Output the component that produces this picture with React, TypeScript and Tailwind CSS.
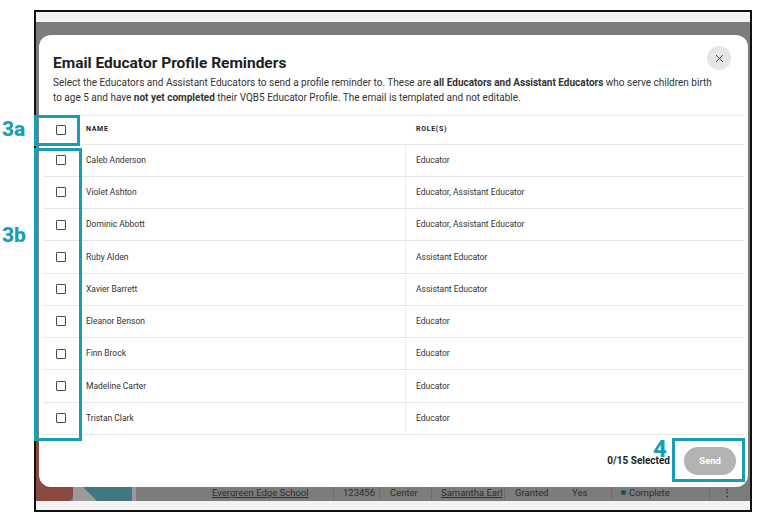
import { X } from "lucide-react";

const rows = [
    ["Caleb Anderson", "Educator"],
    ["Violet Ashton", "Educator, Assistant Educator"],
    ["Dominic Abbott", "Educator, Assistant Educator"],
    ["Ruby Alden", "Assistant Educator"],
    ["Xavier Barrett", "Assistant Educator"],
    ["Eleanor Benson", "Educator"],
    ["Finn Brock", "Educator"],
    ["Madeline Carter", "Educator"],
    ["Tristan Clark", "Educator"],
];

function Box() {
    return <span className="block w-[10px] h-[10px] border-[1.5px] border-[#4a4a4a] rounded-[1px] bg-white" />;
}

function Deco() {
    // the page's header art, dimmed by the backdrop
    return (
        <svg className="absolute left-0 bottom-0" width="100" height="61" viewBox="0 0 100 61">
            <rect x="37" y="0" width="63" height="61" fill="#9a9a9a" />
            <path d="M0 0 H37 V55 Q37 61 31 61 H0 Z" fill="#8a4a42" />
            <polygon points="47,47 96,47 96,61 61,61" fill="#41777f" />
        </svg>
    );
}

export default function App() {
    return (
        <div className="relative w-[763px] h-[521px] bg-white overflow-hidden font-['Roboto',sans-serif] text-[#222]">
            <div className="ml-[34px] mt-[10px] w-[718px] h-[502px] border-2 border-[#111] flex flex-col">
                <div className="h-[10px] bg-[#f3f3f3]" />
                <div className="relative flex-1 bg-[#7c7c7c] flex flex-col pt-[13px] pl-[3px] pr-[2px]">
                    <Deco />
                    <div className="relative z-10 h-[452px] bg-white rounded-[12px] flex flex-col">
                        <div className="relative px-[14px] pt-[18px]">
                            <h1 className="text-[15.5px] leading-[20px] font-bold text-[#1e1e1e]">
                                Email Educator Profile Reminders
                            </h1>
                            <p className="mt-[1.5px] w-[660px] text-[10px] leading-[15px] text-[#333]">
                                Select the Educators and Assistant Educators to send a profile reminder to. These are{" "}
                                <b>all Educators and Assistant Educators</b> who serve children birth to age 5 and have{" "}
                                <b>not yet completed</b> their VQB5 Educator Profile. The email is templated and not editable.
                            </p>
                            <button className="absolute right-[17px] top-[11px] w-[24px] h-[24px] rounded-full bg-[#e6e6e6] flex items-center justify-center text-[#333]">
                                <X size={13} strokeWidth={1.6} />
                            </button>
                        </div>
                        <div className="mx-[4px] mt-[10px]">
                            <div className="flex h-[30px] items-center border-y border-[#e6e6e6]">
                                <div className="w-[35px] flex justify-center"><Box /></div>
                                <div className="w-[328px] pl-[8px] text-[7px] font-bold tracking-[0.1em] text-[#222]">NAME</div>
                                <div className="pl-[10px] text-[7px] font-bold tracking-[0.1em] text-[#222]">ROLE(S)</div>
                            </div>
                            {rows.map(([name, role]) => (
                                <div key={name} className="flex h-[32.25px] border-b border-[#e6e6e6] text-[8.5px] text-[#333]">
                                    <div className="w-[35px] flex items-center justify-center"><Box /></div>
                                    <div className="w-[328px] pl-[8px] flex items-center border-r border-[#ececec]">{name}</div>
                                    <div className="pl-[10px] flex items-center">{role}</div>
                                </div>
                            ))}
                        </div>
                        <div className="flex-1 flex items-center justify-end gap-[14px] pr-[12px]">
                            <span className="text-[10px] font-bold text-[#1e1e1e]">0/15 Selected</span>
                            <button className="w-[52px] h-[28px] rounded-full bg-[#b3b3b3] text-white text-[9.5px] font-bold">
                                Send
                            </button>
                        </div>
                    </div>
                    <div className="relative z-10 flex h-[14px] text-[9.5px] text-[#2e2e2e] leading-[12px]">
                        <div className="w-[161px]" />
                        <div className="w-[134px] pl-[12px] border-r border-[#6e6e6e] underline">Evergreen Edge School</div>
                        <div className="w-[46px] pl-[9px] border-r border-[#6e6e6e]">123456</div>
                        <div className="w-[52px] pl-[10px] border-r border-[#6e6e6e]">Center</div>
                        <div className="w-[73px] pl-[9px] border-r border-[#6e6e6e] underline">Samantha Earl</div>
                        <div className="w-[55px] pl-[10px]">Granted</div>
                        <div className="w-[52px] pl-[12px] border-r border-[#6e6e6e]">Yes</div>
                        <div className="w-[98px] pl-[9px] border-r border-[#6e6e6e] flex items-start gap-[3px]">
                            <span className="mt-[3px] w-[5px] h-[5px] rounded-full bg-[#1f4f5a]" />
                            Complete
                        </div>
                        <div className="pl-[12px] font-bold">⋮</div>
                    </div>
                </div>
                <div className="h-[9px] bg-[#f3f3f3]" />
            </div>

            <span className="absolute z-20 left-[2px] top-[119px] text-[21px] leading-none font-extrabold text-[#179db5]">3a</span>
            <span className="absolute z-20 left-[2px] top-[225px] text-[21px] leading-none font-extrabold text-[#179db5]">3b</span>
            <div className="absolute z-20 left-[34px] top-[115px] w-[46px] h-[31px] border-[3px] border-[#179db5]" />
            <div className="absolute z-20 left-[34px] top-[148px] w-[48px] h-[293px] border-[3px] border-[#179db5]" />
            <span className="absolute z-20 left-[653px] top-[437px] text-[24px] leading-none font-extrabold text-[#179db5]">4</span>
            <div className="absolute z-20 left-[672px] top-[438px] w-[73px] h-[44px] border-[3px] border-[#179db5]" />
        </div>
    );
}
